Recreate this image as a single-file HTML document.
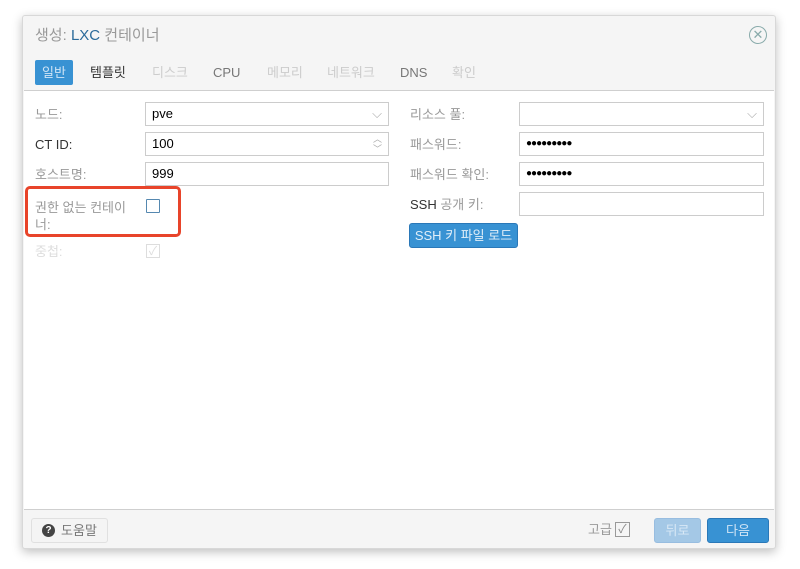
<!DOCTYPE html>
<html><head><meta charset="utf-8"><style>
*{box-sizing:border-box;margin:0;padding:0}
body{width:800px;height:569px;background:#fff;position:relative;overflow:hidden;font-family:"Liberation Sans","Noto Sans CJK KR",sans-serif;font-size:13px;line-height:16px;color:#333}
.dlg{position:absolute;left:22px;top:15px;width:754px;height:534px;background:#f5f5f5;border:1px solid #d8d8d8;border-radius:3px;box-shadow:0 3px 10px rgba(0,0,0,.25)}
.a{position:absolute}
.title{left:12px;top:11px;font-size:15px;line-height:18px;color:#999}
.title b{font-weight:normal;color:#2a6a9a}
.close{left:726px;top:10px;width:18px;height:18px;border:1.3px solid #8aa;border-radius:50%;color:#8aa;font-size:13px;line-height:15px;text-align:center}
.tab{top:49px;font-size:13px;line-height:16px;color:#ccc}
.body{left:1px;top:74px;width:750px;height:420px;background:#fff;border-top:1px solid #cfcfcf;border-bottom:1px solid #cfcfcf}
.lbl{color:#999;font-size:13px;line-height:16px}
.inp{height:24px;border:1px solid #ccc;background:#fff;padding-left:6px;line-height:22px;font-size:13px;color:#000}
.btn{border-radius:3px;text-align:center;line-height:23px;height:25px;font-size:13px}
</style></head><body>
<div class="dlg">
<div class="a title">생성: <b>LXC</b> 컨테이너</div>
<div class="a close">✕</div>
<div class="a" style="left:12px;top:44px;width:38px;height:25px;background:#3892d3;border-radius:2px;color:#cfe4f5;text-align:center;line-height:25px">일반</div>
<div class="a tab" style="left:67px;color:#333">템플릿</div>
<div class="a tab" style="left:129px">디스크</div>
<div class="a tab" style="left:190px;color:#777">CPU</div>
<div class="a tab" style="left:244px">메모리</div>
<div class="a tab" style="left:304px">네트워크</div>
<div class="a tab" style="left:377px;color:#777">DNS</div>
<div class="a tab" style="left:429px">확인</div>
<div class="a body"></div>
<div class="a lbl" style="left:12px;top:91px">노드:</div>
<div class="a inp" style="left:122px;top:86px;width:244px">pve<span style="position:absolute;right:6px;color:#aaa">⌵</span></div>
<div class="a lbl" style="left:12px;top:121px;color:#333">CT ID:</div>
<div class="a inp" style="left:122px;top:116px;width:244px">100<span style="position:absolute;right:6px;top:1px;color:#aaa;font-size:9px;line-height:10px">︿<br>﹀</span></div>
<div class="a lbl" style="left:12px;top:151px">호스트명:</div>
<div class="a inp" style="left:122px;top:146px;width:244px">999</div>
<div class="a" style="left:2px;top:170px;width:156px;height:51px;border:3px solid #e8442a;border-radius:5px"></div>
<div class="a lbl" style="left:12px;top:183px;line-height:17px">권한 없는 컨테이<br>너:</div>
<div class="a" style="left:123px;top:183px;width:14px;height:14px;border:1.5px solid #5588b0;border-radius:1px"></div>
<div class="a lbl" style="left:12px;top:228px;color:#ddd">중첩:</div>
<div class="a" style="left:123px;top:228px;width:14px;height:14px;border:1px solid #ddd;color:#ddd;font-size:12px;line-height:12px;text-align:center">✓</div>
<div class="a lbl" style="left:387px;top:91px">리소스 풀:</div>
<div class="a inp" style="left:496px;top:86px;width:245px"><span style="position:absolute;right:6px;color:#aaa">⌵</span></div>
<div class="a lbl" style="left:387px;top:121px">패스워드:</div>
<div class="a inp" style="left:496px;top:116px;width:245px;font-size:10px;letter-spacing:-1px">●●●●●●●●●</div>
<div class="a lbl" style="left:387px;top:151px">패스워드 확인:</div>
<div class="a inp" style="left:496px;top:146px;width:245px;font-size:10px;letter-spacing:-1px">●●●●●●●●●</div>
<div class="a lbl" style="left:387px;top:181px"><span style="color:#333">SSH</span> 공개 키:</div>
<div class="a inp" style="left:496px;top:176px;width:245px"></div>
<div class="a btn" style="left:386px;top:207px;width:109px;background:#3892d3;border:1px solid #2a78b8;color:#e0eef8">SSH 키 파일 로드</div>
<div class="a btn" style="left:8px;top:502px;width:77px;background:#f4f4f4;border:1px solid #e0e0e0;color:#777;display:flex;align-items:center;justify-content:center;gap:6px"><span style="display:inline-block;width:13px;height:13px;border-radius:50%;background:#444;color:#fff;font-size:10px;line-height:13px;font-weight:bold">?</span><span>도움말</span></div>
<div class="a lbl" style="left:565px;top:506px">고급</div>
<div class="a" style="left:592px;top:506px;width:15px;height:15px;border:1px solid #999;color:#888;font-size:12px;line-height:13px;text-align:center">✓</div>
<div class="a btn" style="left:631px;top:502px;width:47px;background:#a4c8e6;border:1px solid #98bde0;color:#d8e8f5">뒤로</div>
<div class="a btn" style="left:684px;top:502px;width:62px;background:#3892d3;border:1px solid #2a78b8;color:#cfe4f5">다음</div>
</div>
</body></html>
